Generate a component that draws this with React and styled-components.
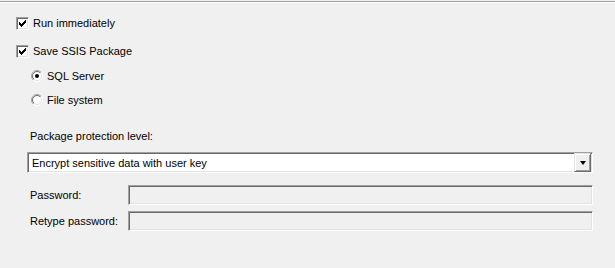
import styled, { createGlobalStyle } from "styled-components";

const GlobalStyle = createGlobalStyle`
    html, body {
        margin: 0;
        padding: 0;
        background: #f0f0f0;
    }
    body {
        font-family: "Liberation Sans", Arial, sans-serif;
        font-size: 11px;
        color: #000;
    }
`;

const sunken = `
    border: 1px solid;
    border-color: #a0a0a0 #ffffff #ffffff #a0a0a0;
    box-shadow: inset 1px 1px 0 #696969, inset -1px -1px 0 #e3e3e3;
    box-sizing: border-box;
`;

function CheckMark() {
    const rows = [
        [[6, 1]],
        [[5, 2]],
        [[0, 1], [4, 3]],
        [[0, 2], [3, 3]],
        [[0, 5]],
        [[1, 3]],
        [[2, 1]],
    ];
    return (
        <svg width="13" height="13" viewBox="0 0 13 13" shapeRendering="crispEdges">
            {rows.map((segs, y) =>
                segs.map(([x, w]) => <rect key={`${y}-${x}`} x={3 + x} y={3 + y} width={w} height={1} fill="#000" />)
            )}
        </svg>
    );
}

function RadioDot({ checked }) {
    return (
        <svg width="12" height="12" viewBox="0 0 12 12">
            <defs>
                <linearGradient id="outerRing" x1="0" y1="0" x2="1" y2="1">
                    <stop offset="0.5" stopColor="#a0a0a0" />
                    <stop offset="0.5" stopColor="#ffffff" />
                </linearGradient>
                <linearGradient id="innerRing" x1="0" y1="0" x2="1" y2="1">
                    <stop offset="0.5" stopColor="#696969" />
                    <stop offset="0.5" stopColor="#e3e3e3" />
                </linearGradient>
            </defs>
            <circle cx="6" cy="6" r="5.5" fill="none" stroke="url(#outerRing)" strokeWidth="1" />
            <circle cx="6" cy="6" r="4.5" fill="#fff" stroke="url(#innerRing)" strokeWidth="1" />
            {checked && <circle cx="6" cy="6" r="2" fill="#000" />}
        </svg>
    );
}

export default function App() {
    return (
        <>
            <GlobalStyle />
            <Page>
                <CheckRow>
                    <CheckBox><CheckMark /></CheckBox>
                    Run immediately
                </CheckRow>
                <CheckRow>
                    <CheckBox><CheckMark /></CheckBox>
                    Save SSIS Package
                </CheckRow>
                <RadioGroup>
                    <RadioRow>
                        <RadioDot checked />
                        SQL Server
                    </RadioRow>
                    <RadioRow>
                        <RadioDot />
                        File system
                    </RadioRow>
                </RadioGroup>

                <SectionLabel>Package protection level:</SectionLabel>
                <Select>
                    <SelectText>Encrypt sensitive data with user key</SelectText>
                    <DropButton>
                        <Arrow />
                    </DropButton>
                </Select>

                <FieldRow>
                    <FieldLabel>Password:</FieldLabel>
                    <TextBox />
                </FieldRow>
                <FieldRow second>
                    <FieldLabel>Retype password:</FieldLabel>
                    <TextBox />
                </FieldRow>
            </Page>
        </>
    );
}

const Page = styled.div`
    margin-top: 1px;
    border-top: 1px solid #a0a0a0;
    box-shadow: inset 0 1px 0 #ffffff;
    height: 266px;
    box-sizing: border-box;
    padding-top: 7px;
    display: flex;
    flex-direction: column;
`;

const CheckRow = styled.div`
    height: 28px;
    display: flex;
    align-items: center;
    gap: 4px;
    padding-left: 16px;
`;

const CheckBox = styled.div`
    width: 13px;
    height: 13px;
    background: #fff;
    position: relative;
    ${sunken}
    svg {
        position: absolute;
        left: -1px;
        top: -1px;
    }
`;

const RadioGroup = styled.div`
    margin-top: -1px;
    padding-left: 31px;
    display: flex;
    flex-direction: column;
`;

const RadioRow = styled.div`
    height: 24px;
    display: flex;
    align-items: center;
    gap: 4px;
`;

const SectionLabel = styled.div`
    margin-top: 18px;
    margin-left: 30px;
    line-height: 13px;
`;

const Select = styled.div`
    margin-top: 9px;
    margin-left: 27px;
    width: 566px;
    height: 21px;
    background: #fff;
    display: flex;
    align-items: center;
    justify-content: space-between;
    padding: 1px;
    ${sunken}
`;

const SelectText = styled.span`
    padding-left: 3px;
`;

const DropButton = styled.div`
    width: 17px;
    height: 19px;
    background: #f0f0f0;
    box-sizing: border-box;
    border: 1px solid;
    border-color: #e3e3e3 #696969 #696969 #e3e3e3;
    box-shadow: inset 1px 1px 0 #ffffff, inset -1px -1px 0 #a0a0a0;
    display: flex;
    align-items: center;
    justify-content: center;
`;

const Arrow = styled.div`
    width: 0;
    height: 0;
    border-left: 3.5px solid transparent;
    border-right: 3.5px solid transparent;
    border-top: 4px solid #000;
`;

const FieldRow = styled.div`
    margin-top: ${({ second }) => (second ? "6px" : "12px")};
    display: flex;
    align-items: center;
    padding-left: 30px;
`;

const FieldLabel = styled.span`
    width: 98px;
`;

const TextBox = styled.div`
    width: 465px;
    height: 20px;
    background: #f0f0f0;
    ${sunken}
`;
